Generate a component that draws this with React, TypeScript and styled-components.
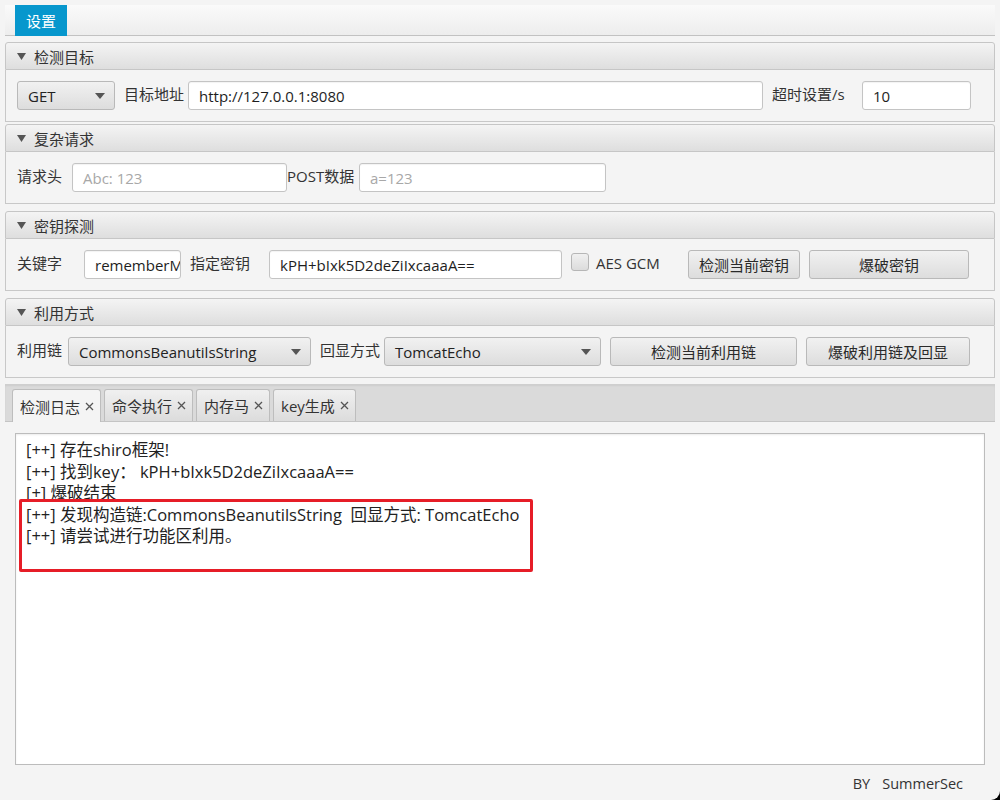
import React from 'react'
import styled, { createGlobalStyle } from 'styled-components'

const GlobalStyle = createGlobalStyle`
  html, body {
    margin: 0;
    padding: 0;
    background: #000;
  }
  body {
    font-family: "Open Sans", "Noto Sans CJK SC", sans-serif;
    font-size: 15px;
    color: #333;
  }
  #root {
    width: 1000px;
    height: 800px;
  }
`

const Window = styled.div`
  width: 1000px;
  height: 800px;
  box-sizing: border-box;
  background: #f4f4f4;
  border-bottom-right-radius: 9px;
  padding: 5px 5px 0;
  display: flex;
  flex-direction: column;
  overflow: hidden;
`

const MenuBar = styled.div`
  height: 31px;
  box-sizing: border-box;
  background: linear-gradient(#fafafa, #ededed);
  border-bottom: 1px solid #c2c2c2;
  padding-left: 10px;
  display: flex;
`

const MenuButton = styled.div`
  background: #0797cd;
  color: #fff;
  padding: 0 11px;
  display: flex;
  align-items: center;
  height: 31px;
`

const TitledPane = styled.section<{ $mt: number }>`
  margin-top: ${({ $mt }) => $mt}px;
`

const PaneHeader = styled.div`
  height: 28px;
  box-sizing: border-box;
  border: 1px solid #c6c6c6;
  border-radius: 3px 3px 0 0;
  background: linear-gradient(#f4f4f4, #dedede);
  display: flex;
  align-items: center;
  gap: 8px;
  padding-left: 11px;
  color: #333;
`

const PaneContent = styled.div`
  border: 1px solid #c8c8c8;
  border-top: none;
  background: #f4f4f4;
  padding: 11px;
  display: flex;
  align-items: center;
`

const Label = styled.span<{ $ml?: number; $w?: number }>`
  margin-left: ${({ $ml }) => $ml || 0}px;
  ${({ $w }) => ($w ? `width: ${$w}px;` : '')}
  flex-shrink: 0;
  white-space: nowrap;
  color: #333;
  margin-top: -4px;
`

const Field = styled.div<{ $ml?: number; $w: number; $ph?: boolean }>`
  margin-left: ${({ $ml }) => $ml || 0}px;
  width: ${({ $w }) => $w}px;
  height: 29px;
  box-sizing: border-box;
  flex-shrink: 0;
  border: 1px solid #c4c4c4;
  border-radius: 3px;
  background: #fff;
  box-shadow: inset 0 1px 1px rgba(0, 0, 0, 0.05);
  padding: 0 10px;
  display: flex;
  align-items: center;
  white-space: nowrap;
  overflow: hidden;
  color: ${({ $ph }) => ($ph ? '#a8a8a8' : '#1e1e1e')};
`

const Combo = styled.div<{ $ml?: number; $w: number }>`
  margin-left: ${({ $ml }) => $ml || 0}px;
  width: ${({ $w }) => $w}px;
  height: 29px;
  box-sizing: border-box;
  flex-shrink: 0;
  border: 1px solid #b9b9b9;
  border-radius: 3px;
  background: linear-gradient(#f1f1f1, #dddddd);
  padding: 0 9px 0 10px;
  display: flex;
  align-items: center;
  justify-content: space-between;
  color: #222;
`

const Button = styled.div<{ $ml?: number; $w: number }>`
  margin-left: ${({ $ml }) => $ml || 0}px;
  width: ${({ $w }) => $w}px;
  height: 29px;
  box-sizing: border-box;
  flex-shrink: 0;
  border: 1px solid #b9b9b9;
  border-radius: 3px;
  background: linear-gradient(#f1f1f1, #dddddd);
  display: flex;
  align-items: center;
  justify-content: center;
  color: #2a2a2a;
`

const CheckBox = styled.div<{ $ml?: number }>`
  margin-left: ${({ $ml }) => $ml || 0}px;
  width: 18px;
  height: 18px;
  box-sizing: border-box;
  flex-shrink: 0;
  border: 1px solid #b6b6b6;
  border-radius: 3px;
  background: linear-gradient(#f0f0f0, #dcdcdc);
  margin-top: -5px;
`

const TabPane = styled.div`
  margin-top: 6px;
  flex: 1;
  display: flex;
  flex-direction: column;
`

const TabHeader = styled.div`
  height: 38px;
  box-sizing: border-box;
  background: #dadada;
  border-top: 1px solid #cfcfcf;
  border-bottom: 1px solid #c4c4c4;
  box-shadow: inset 0 1px 2px rgba(0, 0, 0, 0.06);
  padding-left: 7px;
  display: flex;
  align-items: flex-end;
  gap: 3px;
`

const Tab = styled.div<{ $active?: boolean }>`
  height: ${({ $active }) => ($active ? 33 : 32)}px;
  margin-bottom: ${({ $active }) => ($active ? -1 : 0)}px;
  box-sizing: border-box;
  border: 1px solid #bdbdbd;
  border-bottom: none;
  border-radius: 3px 3px 0 0;
  background: ${({ $active }) => ($active ? '#f4f4f4' : 'linear-gradient(#f0f0f0, #dcdcdc)')};
  padding: 0 6px 0 7px;
  display: flex;
  align-items: center;
  gap: 5px;
  color: #333;
`

const TabBody = styled.div`
  flex: 1;
  padding: 11px 10px 0;
  display: flex;
  flex-direction: column;
`

const LogArea = styled.div`
  position: relative;
  height: 332px;
  box-sizing: border-box;
  background: #fff;
  border: 1px solid #bcbcbc;
  box-shadow: inset 0 1px 2px rgba(0, 0, 0, 0.08);
  padding: 5px 10px;
  font-size: 16.5px;
  line-height: 21.5px;
  color: #222;
`

const LogLine = styled.div`
  white-space: pre;
`

// red annotation box drawn over the log
const Highlight = styled.div`
  position: absolute;
  left: 3px;
  top: 65px;
  width: 514px;
  height: 73px;
  box-sizing: border-box;
  border: 3px solid #e61d27;
  border-radius: 2px;
`

const Footer = styled.div`
  height: 34px;
  display: flex;
  justify-content: flex-end;
  align-items: center;
  gap: 12px;
  padding-right: 32px;
  color: #333;
  font-size: 14.5px;
`

const Arrow = () => (
  <svg width="9" height="7" viewBox="0 0 9 7">
    <path d="M0 0 H9 L4.5 7 Z" fill="#555" />
  </svg>
)

const ComboArrow = () => (
  <svg width="10" height="6" viewBox="0 0 10 6">
    <path d="M0 0 H10 L5 6 Z" fill="#555" />
  </svg>
)

const CloseIcon = () => (
  <svg width="9" height="9" viewBox="0 0 9 9">
    <path d="M1 1 L8 8 M8 1 L1 8" stroke="#555" strokeWidth="1.3" />
  </svg>
)

const tabs = [
  { name: '检测日志', active: true },
  { name: '命令执行' },
  { name: '内存马' },
  { name: 'key生成' },
]

const logs = [
  '[++] 存在shiro框架!',
  '[++] 找到key： kPH+bIxk5D2deZiIxcaaaA==',
  '[+] 爆破结束',
  '[++] 发现构造链:CommonsBeanutilsString  回显方式: TomcatEcho',
  '[++] 请尝试进行功能区利用。',
]

const App: React.FC = () => {
  return (
    <>
      <GlobalStyle />
      <Window>
        <MenuBar>
          <MenuButton>设置</MenuButton>
        </MenuBar>

        <TitledPane $mt={6}>
          <PaneHeader>
            <Arrow />
            检测目标
          </PaneHeader>
          <PaneContent>
            <Combo $w={98}>
              GET
              <ComboArrow />
            </Combo>
            <Label $ml={9} $w={56}>目标地址</Label>
            <Field $ml={8} $w={575}>http://127.0.0.1:8080</Field>
            <Label $ml={9} $w={90}>超时设置/s</Label>
            <Field $w={109}>10</Field>
          </PaneContent>
        </TitledPane>

        <TitledPane $mt={2}>
          <PaneHeader>
            <Arrow />
            复杂请求
          </PaneHeader>
          <PaneContent>
            <Label $w={42}>请求头</Label>
            <Field $ml={13} $w={215} $ph>Abc: 123</Field>
            <Label $w={68}>POST数据</Label>
            <Field $ml={4} $w={247} $ph>a=123</Field>
          </PaneContent>
        </TitledPane>

        <TitledPane $mt={7}>
          <PaneHeader>
            <Arrow />
            密钥探测
          </PaneHeader>
          <PaneContent>
            <Label $w={42}>关键字</Label>
            <Field $ml={25} $w={97}>rememberMe</Field>
            <Label $ml={9} $w={56}>指定密钥</Label>
            <Field $ml={23} $w={293}>kPH+bIxk5D2deZiIxcaaaA==</Field>
            <CheckBox $ml={9} />
            <Label $ml={7} $w={63}>AES GCM</Label>
            <Button $ml={29} $w={112}>检测当前密钥</Button>
            <Button $ml={9} $w={160}>爆破密钥</Button>
          </PaneContent>
        </TitledPane>

        <TitledPane $mt={7}>
          <PaneHeader>
            <Arrow />
            利用方式
          </PaneHeader>
          <PaneContent>
            <Label $w={42}>利用链</Label>
            <Combo $ml={9} $w={243}>
              CommonsBeanutilsString
              <ComboArrow />
            </Combo>
            <Label $ml={9} $w={56}>回显方式</Label>
            <Combo $ml={8} $w={217}>
              TomcatEcho
              <ComboArrow />
            </Combo>
            <Button $ml={9} $w={187}>检测当前利用链</Button>
            <Button $ml={9} $w={164}>爆破利用链及回显</Button>
          </PaneContent>
        </TitledPane>

        <TabPane>
          <TabHeader>
            {tabs.map((t) => (
              <Tab key={t.name} $active={t.active}>
                {t.name}
                <CloseIcon />
              </Tab>
            ))}
          </TabHeader>
          <TabBody>
            <LogArea>
              {logs.map((line) => (
                <LogLine key={line}>{line}</LogLine>
              ))}
              <Highlight />
            </LogArea>
          </TabBody>
        </TabPane>

        <Footer>
          <span>BY</span>
          <span>SummerSec</span>
        </Footer>
      </Window>
    </>
  )
}

export default App
